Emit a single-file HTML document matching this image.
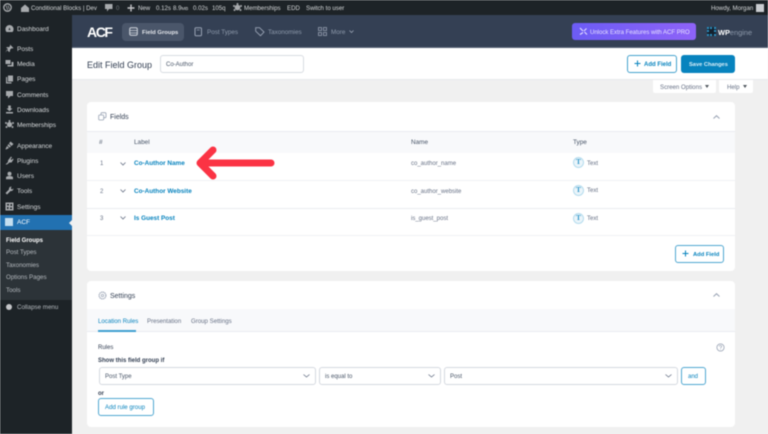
<!DOCTYPE html>
<html><head><meta charset="utf-8">
<style>
*{box-sizing:border-box}
html,body{margin:0;padding:0;width:768px;height:434px;overflow:hidden;background:#f0f0f0;font-family:"Liberation Sans",sans-serif}
#w{position:absolute;left:0;top:0;width:768px;height:434px;background:#f0f0f0;filter:blur(.4px)}
.a{position:absolute;white-space:nowrap}
.t{position:absolute;white-space:nowrap;line-height:10px;height:10px;margin-top:1px}
.bar{font-size:6.1px;color:#d5d8da}
.side{font-size:6.5px;color:#d5d8da}
.sub{font-size:6.2px;color:#b4b9be}
.nav{font-size:6.3px;color:#8d99ab}
.lab{font-size:6.4px;color:#0783be;font-weight:bold}
.gray{font-size:6px;color:#667085}
.hd{font-size:6.4px;color:#475467}
.sel{position:absolute;background:#fff;border:1px solid #d5d9e0;border-radius:3px;height:18px}
.T{position:absolute;width:11px;height:11px;border-radius:50%;background:#ebf5fa;border:1px solid #b5dcee;color:#2b93c8;font:bold 7px/9px "Liberation Serif",serif;text-align:center}
svg{position:absolute;overflow:visible}
.si{fill:#a7aaad}
</style></head><body><div id="w">

<!-- admin bar -->
<div class="a" style="left:0;top:0;width:768px;height:15px;background:#1d2327"></div>
<svg style="left:3px;top:3px" width="9" height="9"><circle cx="4.5" cy="4.5" r="3.7" fill="none" stroke="#a7aaad" stroke-width="1.3"/><path d="M3 2.5L4.7 7M5 2.5L6.3 6" stroke="#a7aaad" stroke-width=".8"/></svg>
<svg style="left:21px;top:4px" width="8" height="8"><path d="M0 4L4 0.5L8 4V8H0Z" fill="#a7aaad"/></svg>
<div class="t bar" style="left:31px;top:3px">Conditional Blocks | Dev</div>
<svg style="left:105px;top:4px" width="8" height="8"><path d="M0 0H7.5V5H4L2 7.5V5H0Z" fill="#a7aaad"/></svg>
<div class="t bar" style="left:116px;top:3px;color:#72777c">0</div>
<svg style="left:127px;top:4px" width="8" height="8"><path d="M4 .5V7.5M.5 4H7.5" stroke="#c3c4c7" stroke-width="1.4"/></svg>
<div class="t bar" style="left:138px;top:3px">New</div>
<div class="t bar" style="left:156px;top:3px">0.12s</div>
<div class="t bar" style="left:173px;top:3px">8.9<span style="font-size:4.5px">MB</span></div>
<div class="t bar" style="left:193px;top:3px">0.02s</div>
<div class="t bar" style="left:212px;top:3px">105q</div>
<svg style="left:233px;top:3px" width="9" height="9"><circle cx="4.5" cy="4.5" r="2.8" fill="#a7aaad"/><circle cx="4.5" cy="1" r="1" fill="#a7aaad"/><circle cx="1" cy="3" r="1" fill="#a7aaad"/><circle cx="8" cy="3" r="1" fill="#a7aaad"/><circle cx="1.5" cy="7" r="1" fill="#a7aaad"/><circle cx="7.5" cy="7" r="1" fill="#a7aaad"/></svg>
<div class="t bar" style="left:244px;top:3px">Memberships</div>
<div class="t bar" style="left:287px;top:3px">EDD</div>
<div class="t bar" style="left:306px;top:3px">Switch to user</div>
<div class="t bar" style="left:711px;top:3px">Howdy, Morgan</div>
<div class="a" style="left:756px;top:4px;width:8px;height:8px;background:#c9ccd0"></div>

<!-- sidebar -->
<div class="a" style="left:0;top:15px;width:72px;height:419px;background:#1d2327"></div>
<svg style="left:5px;top:24px" width="9" height="9"><path class="si" d="M4.5 1A4 4 0 0 0 .5 5.5C.5 6.5 1 7.5 1.5 8H7.5C8 7.500 8.500 6.500 8.500 5.500A4 4 0 0 0 4.500 1ZM4.500 3.500L5.500 6H3.500Z" fill-rule="evenodd"/></svg>
<div class="t side" style="left:17px;top:24px">Dashboard</div>
<svg style="left:5px;top:44px" width="9" height="9"><path class="si" d="M5 .5L8.500 4L7.500 4.500L6.500 4.200L5 5.700L5 7.500L4 8L1.800 5.500L.5 8.500L3 5L1 3.500L2.500 3L4 3.300L5 2Z"/></svg>
<div class="t side" style="left:17px;top:44px">Posts</div>
<svg style="left:5px;top:59px" width="9" height="9"><path class="si" d="M.5 1H5.500V5H.5ZM6.500 3H8.500V7.500H2.500V6H6.500Z"/></svg>
<div class="t side" style="left:17px;top:59px">Media</div>
<svg style="left:5px;top:75px" width="9" height="9"><path class="si" d="M3 .5H8V6.500H3ZM1 2H2.200V7.300H6.500V8.500H1Z"/></svg>
<div class="t side" style="left:17px;top:74px">Pages</div>
<svg style="left:5px;top:90px" width="9" height="9"><path class="si" d="M1 1H8V6H5.500L3 8.500V6H1Z"/></svg>
<div class="t side" style="left:17px;top:90px">Comments</div>
<svg style="left:5px;top:105px" width="9" height="9"><path class="si" d="M3.200 .5H5.800V3.500H7.500L4.500 6.300L1.500 3.500H3.200ZM1 7H8V8.500H1Z"/></svg>
<div class="t side" style="left:17px;top:105px">Downloads</div>
<svg style="left:5px;top:120px" width="9" height="9"><circle cx="4.500" cy="4.500" r="2.600" fill="#a7aaad"/><circle cx="4.500" cy="1" r="1" fill="#a7aaad"/><circle cx="1" cy="3" r="1" fill="#a7aaad"/><circle cx="8" cy="3" r="1" fill="#a7aaad"/><circle cx="1.500" cy="7" r="1" fill="#a7aaad"/><circle cx="7.500" cy="7" r="1" fill="#a7aaad"/></svg>
<div class="t side" style="left:17px;top:120px">Memberships</div>
<svg style="left:5px;top:141px" width="9" height="9"><path class="si" d="M5.500 .5L8.500 3L6.500 5L4 2.500ZM3.500 3L6 5.500L4.500 6.500L2.500 4.500ZM2 5L4 7L1 8.500L.5 8Z"/></svg>
<div class="t side" style="left:17px;top:141px">Appearance</div>
<svg style="left:5px;top:156px" width="9" height="9"><path class="si" d="M6 .5L7 1.500L5.500 3L6.500 4L8 2.500L8.500 3.500L6.500 6.500H4.500L2 8.500H.5L3 6V4.500Z"/></svg>
<div class="t side" style="left:17px;top:156px">Plugins</div>
<svg style="left:5px;top:171px" width="9" height="9"><circle cx="4.500" cy="2.700" r="2" fill="#a7aaad"/><path class="si" d="M1 8.300V6.500C1 5.500 2.500 5 4.500 5S8 5.500 8 6.500V8.300Z"/></svg>
<div class="t side" style="left:17px;top:171px">Users</div>
<svg style="left:5px;top:186px" width="9" height="9"><path class="si" d="M6.500 .5A2.500 2.500 0 0 0 4 3.500L.5 7L2 8.500L5.500 5A2.500 2.500 0 0 0 8.500 2.500L7 3.500L5.800 2.500Z"/></svg>
<div class="t side" style="left:17px;top:186px">Tools</div>
<svg style="left:5px;top:202px" width="9" height="9"><path class="si" fill-rule="evenodd" d="M.5 .5H8.500V8.500H.5ZM2 2V3.500H4V2ZM5 5.500V7H7V5.500ZM5.500 2V4H7V2ZM2 5V7H3.500V5Z"/></svg>
<div class="t side" style="left:17px;top:202px">Settings</div>
<div class="a" style="left:0;top:215px;width:72px;height:15px;background:#2271b1"></div>
<div class="a" style="left:5px;top:218px;width:8px;height:8px;background:#c5dff0"></div>
<div class="t side" style="left:17px;top:217px;color:#fff">ACF</div>
<div class="a" style="left:69px;top:219px;width:0;height:0;border:4px solid transparent;border-right-color:#f0f0f0;border-left:0"></div>
<div class="a" style="left:0;top:230px;width:72px;height:70px;background:#2c3338"></div>
<div class="t sub" style="left:6px;top:235px;color:#fff;font-weight:bold;font-size:6px">Field Groups</div>
<div class="t sub" style="left:6px;top:247px">Post Types</div>
<div class="t sub" style="left:6px;top:260px">Taxonomies</div>
<div class="t sub" style="left:6px;top:272px">Options Pages</div>
<div class="t sub" style="left:6px;top:285px">Tools</div>
<div class="a" style="left:6px;top:304px;width:6px;height:6px;border-radius:50%;background:#c3c4c7"></div>
<div class="t sub" style="left:17px;top:302px">Collapse menu</div>

<!-- ACF nav -->
<div class="a" style="left:72px;top:15px;width:696px;height:33px;background:#344054;border-bottom:1px solid #5a6577"></div>
<div class="t" style="left:87px;top:25px;height:14px;line-height:14px;font-size:14px;font-weight:bold;color:#fff;letter-spacing:-1.4px;margin-top:0">ACF</div>
<div class="a" style="left:122px;top:23px;width:62px;height:18px;border-radius:4px;background:#4a566a"></div>
<svg style="left:129px;top:27px" width="10" height="10"><rect x=".7" y=".7" width="7.6" height="7.6" rx="1.5" fill="none" stroke="#d0d5dd"/><path d="M1 3.5H8M1 6H8" stroke="#d0d5dd" stroke-width=".7"/></svg>
<div class="t" style="left:142px;top:27px;font-size:5.9px;color:#e4e7ec;font-weight:bold">Field Groups</div>
<svg style="left:194px;top:27px" width="10" height="10"><rect x="1" y=".7" width="6.5" height="8" rx="1" fill="none" stroke="#98a2b3"/><path d="M2.7 3H5.7" stroke="#98a2b3" stroke-width=".7"/></svg>
<div class="t nav" style="left:207px;top:27px">Post Types</div>
<svg style="left:255px;top:27px" width="10" height="10"><path d="M.7 .7H4.5L9 5L5.5 8.7L.7 4.2Z" fill="none" stroke="#98a2b3" stroke-width=".9"/></svg>
<div class="t nav" style="left:268px;top:27px">Taxonomies</div>
<svg style="left:318px;top:27px" width="10" height="10"><path d="M.5 .5H3.500V3.500H.5ZM5.500 .5H8.500V3.500H5.500ZM.5 5.500H3.500V8.500H.5ZM5.500 5.500H8.500V8.500H5.500Z" fill="none" stroke="#98a2b3" stroke-width=".8"/></svg>
<div class="t nav" style="left:331px;top:27px">More</div>
<svg style="left:349px;top:30px" width="5" height="4"><path d="M.5 .5L2.5 2.500L4.500 .5" fill="none" stroke="#98a2b3" stroke-width=".8"/></svg>
<div class="a" style="left:572px;top:23px;width:124px;height:17px;border-radius:3px;background:linear-gradient(90deg,#6c5cf5,#8e63f8)"></div>
<svg style="left:579px;top:27px" width="9" height="9"><path d="M1 1L4 4M7.500 1.500L5 4M1 7.500L4 5.500M5.500 5L8 7.500" stroke="#e4e0ff" stroke-width="1.1"/></svg>
<div class="t" style="left:590px;top:27px;font-size:6px;color:#e8e4ff">Unlock Extra Features with ACF PRO</div>
<div class="a" style="left:707px;top:27px;width:9px;height:9px;border:2px dotted #2a8fc0;background:#14212e"></div>
<div class="t" style="left:718px;top:27px;font-size:7.4px;color:#fff;font-weight:bold">WP<span style="font-weight:normal;color:#8d99ab">engine</span></div>

<!-- header -->
<div class="a" style="left:72px;top:48px;width:696px;height:32px;background:#fff;border-bottom:1px solid #e8eaed"></div>
<div class="t" style="left:87px;top:59px;font-size:9px;color:#344054">Edit Field Group</div>
<div class="a" style="left:160px;top:55px;width:144px;height:18px;border:1px solid #d8dce2;border-radius:3px;background:#fff"></div>
<div class="t gray" style="left:166px;top:59px;color:#475467">Co-Author</div>
<div class="a" style="left:627px;top:55px;width:50px;height:18px;border:1px solid #0783be;border-radius:3px;background:#fff;opacity:.75"></div>
<svg style="left:634px;top:60px" width="8" height="8"><path d="M3.500 .5V6.500M.5 3.500H6.500" stroke="#0783be" stroke-width="1"/></svg>
<div class="t" style="left:644px;top:59px;font-size:6px;color:#0783be;font-weight:bold">Add Field</div>
<div class="a" style="left:681px;top:55px;width:54px;height:18px;border-radius:3px;background:#0783be"></div>
<div class="t" style="left:689px;top:59px;font-size:5.7px;color:#d9eef8;font-weight:bold">Save Changes</div>

<!-- screen options -->
<div class="a" style="left:653px;top:80px;width:63px;height:13px;background:#fff;border-radius:0 0 2px 2px"></div>
<div class="t gray" style="left:660px;top:82px;font-size:6.100px">Screen Options</div>
<div class="a" style="left:705px;top:85px;border:2px solid transparent;border-top:3px solid #50575e;border-bottom:0"></div>
<div class="a" style="left:719px;top:80px;width:34px;height:13px;background:#fff;border-radius:0 0 2px 2px"></div>
<div class="t gray" style="left:727px;top:82px;font-size:6.100px">Help</div>
<div class="a" style="left:743px;top:85px;border:2px solid transparent;border-top:3px solid #50575e;border-bottom:0"></div>

<!-- fields card -->
<div class="a" style="left:87px;top:102px;width:648px;height:169px;background:#fff;border-radius:4px"></div>
<svg style="left:98px;top:112px" width="9" height="9"><rect x="3" y=".7" width="5" height="5" rx="1" fill="none" stroke="#98a2b3" stroke-width=".8"/><rect x=".7" y="3" width="5" height="5" rx="1" fill="#fff" stroke="#98a2b3" stroke-width=".8"/></svg>
<div class="t" style="left:110px;top:112px;font-size:7px;color:#344054">Fields</div>
<svg style="left:713px;top:115px" width="7" height="4"><path d="M.5 3.500L3.500 .7L6.500 3.500" fill="none" stroke="#98a2b3" stroke-width="1"/></svg>
<div class="a" style="left:87px;top:131px;width:648px;height:22px;background:#f8f9fb;border-top:1px solid #eaecf0"></div>
<div class="t hd" style="left:99px;top:137px">#</div>
<div class="t hd" style="left:134px;top:137px">Label</div>
<div class="t hd" style="left:411px;top:137px">Name</div>
<div class="t hd" style="left:573px;top:137px">Type</div>
<div class="a" style="left:87px;top:180px;width:648px;height:1px;background:#f0f1f4"></div>
<div class="a" style="left:87px;top:208px;width:648px;height:1px;background:#eaecf0"></div>
<div class="a" style="left:87px;top:235px;width:648px;height:1px;background:#f0f1f4"></div>

<div class="t gray" style="left:100px;top:158px">1</div>
<svg style="left:120px;top:162px" width="6" height="4"><path d="M.5 .5L3 3L5.500 .5" fill="none" stroke="#667085" stroke-width=".8"/></svg>
<div class="t lab" style="left:134px;top:158px">Co-Author Name</div>
<div class="t gray" style="left:411px;top:158px">co_author_name</div>
<div class="T" style="left:573px;top:157px">T</div><div class="t gray" style="left:587px;top:158px">Text</div>

<div class="t gray" style="left:100px;top:186px">2</div>
<svg style="left:120px;top:189px" width="6" height="4"><path d="M.5 .5L3 3L5.500 .5" fill="none" stroke="#667085" stroke-width=".8"/></svg>
<div class="t lab" style="left:134px;top:186px">Co-Author Website</div>
<div class="t gray" style="left:411px;top:186px">co_author_website</div>
<div class="T" style="left:573px;top:185px">T</div><div class="t gray" style="left:587px;top:185px">Text</div>

<div class="t gray" style="left:100px;top:213px">3</div>
<svg style="left:120px;top:216px" width="6" height="4"><path d="M.5 .5L3 3L5.500 .5" fill="none" stroke="#667085" stroke-width=".8"/></svg>
<div class="t lab" style="left:134px;top:213px">Is Guest Post</div>
<div class="t gray" style="left:411px;top:213px">is_guest_post</div>
<div class="T" style="left:573px;top:213px">T</div><div class="t gray" style="left:587px;top:213px">Text</div>

<div class="a" style="left:675px;top:245px;width:49px;height:18px;border:1px solid #0783be;border-radius:3px;background:#fff;opacity:.7"></div>
<svg style="left:682px;top:250px" width="8" height="8"><path d="M3.500 .5V6.500M.5 3.500H6.500" stroke="#0783be" stroke-width="1"/></svg>
<div class="t" style="left:693px;top:249px;font-size:5.8px;color:#0783be;font-weight:bold">Add Field</div>

<!-- red arrow -->
<svg style="left:0;top:0" width="768" height="434"><path d="M271 163H200M213 150L200 163L213 176" fill="none" stroke="#fb3344" stroke-width="7" stroke-linecap="round" stroke-linejoin="round"/></svg>

<!-- settings card -->
<div class="a" style="left:87px;top:281px;width:648px;height:146px;background:#fff;border-radius:4px"></div>
<svg style="left:98px;top:291px" width="9" height="9"><circle cx="4.500" cy="4.500" r="3.400" fill="none" stroke="#98a2b3" stroke-width="1.100" stroke-dasharray="1.300 .5"/><circle cx="4.500" cy="4.500" r="1.200" fill="none" stroke="#98a2b3" stroke-width=".7"/></svg>
<div class="t" style="left:110px;top:291px;font-size:7px;color:#344054">Settings</div>
<svg style="left:713px;top:293px" width="7" height="4"><path d="M.5 3.500L3.500 .7L6.500 3.500" fill="none" stroke="#98a2b3" stroke-width="1"/></svg>
<div class="a" style="left:87px;top:309px;width:648px;height:23px;background:#f8f9fb;border-bottom:1px solid #eaecf0"></div>
<div class="t" style="left:98px;top:316px;font-size:6.100px;color:#0783be">Location Rules</div>
<div class="a" style="left:98px;top:330px;width:38px;height:2px;background:#3f9fd0"></div>
<div class="t gray" style="left:147px;top:316px;font-size:6.100px">Presentation</div>
<div class="t gray" style="left:191px;top:316px;font-size:6.100px">Group Settings</div>
<div class="t" style="left:98px;top:342px;font-size:6px;color:#344054">Rules</div>
<div class="t" style="left:98px;top:355px;font-size:6px;color:#344054;font-weight:bold">Show this field group if</div>
<svg style="left:716px;top:343px" width="9" height="9"><circle cx="4.500" cy="4.500" r="3.600" fill="none" stroke="#98a2b3" stroke-width=".8"/><path d="M3.300 3.500C3.400 2 5.800 2.200 5.600 3.600C5.500 4.400 4.500 4.400 4.500 5.500M4.500 6.200V6.900" fill="none" stroke="#98a2b3" stroke-width=".7"/></svg>
<div class="sel" style="left:99px;top:367px;width:217px"></div>
<div class="t gray" style="left:105px;top:371px;color:#475467">Post Type</div>
<svg style="left:303px;top:374px" width="7" height="4"><path d="M.5 .5L3.500 3L6.500 .5" fill="none" stroke="#667085" stroke-width=".8"/></svg>
<div class="sel" style="left:319px;top:367px;width:122px"></div>
<div class="t gray" style="left:325px;top:371px;color:#475467">is equal to</div>
<svg style="left:428px;top:374px" width="7" height="4"><path d="M.5 .5L3.500 3L6.500 .5" fill="none" stroke="#667085" stroke-width=".8"/></svg>
<div class="sel" style="left:444px;top:367px;width:234px"></div>
<div class="t gray" style="left:450px;top:371px;color:#475467">Post</div>
<svg style="left:665px;top:374px" width="7" height="4"><path d="M.5 .5L3.500 3L6.500 .5" fill="none" stroke="#667085" stroke-width=".8"/></svg>
<div class="a" style="left:681px;top:367px;width:25px;height:18px;border:1px solid #0783be;border-radius:3px;background:#fff;opacity:.7"></div>
<div class="t" style="left:688px;top:371px;font-size:6px;color:#0783be">and</div>
<div class="t" style="left:98px;top:388px;font-size:6px;color:#344054;font-weight:bold">or</div>
<div class="a" style="left:98px;top:398px;width:56px;height:18px;border:1px solid #0783be;border-radius:3px;background:#fff;opacity:.7"></div>
<div class="t" style="left:105px;top:402px;font-size:6.100px;color:#0783be">Add rule group</div>
</div></body></html>
